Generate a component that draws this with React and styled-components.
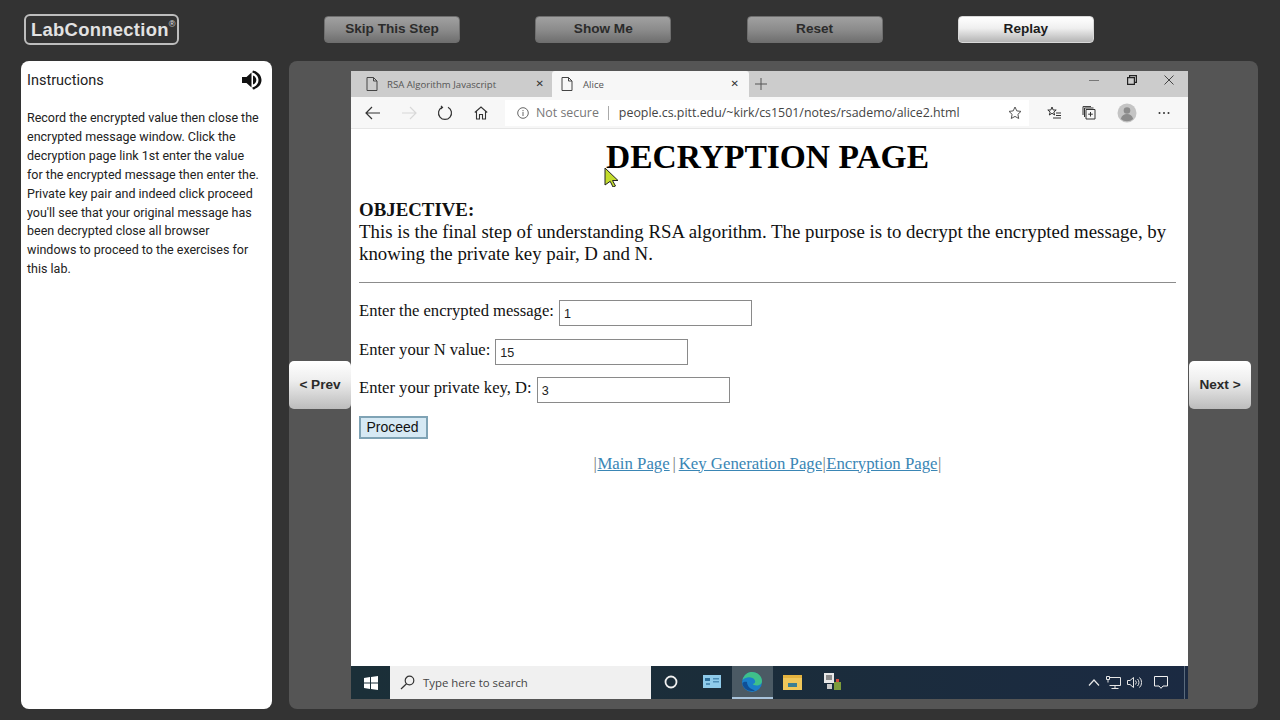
import React from "react";
import styled, { createGlobalStyle } from "styled-components";

const GlobalStyle = createGlobalStyle`
  html, body { margin: 0; padding: 0; background: #333333; }
  body { font-family: "Liberation Sans", Arial, sans-serif; overflow: hidden; }
  * { box-sizing: border-box; }
`;

const instructionLines = [
  "Record the encrypted value then close the",
  "encrypted message window. Click the",
  "decryption page link 1st enter the value",
  "for the encrypted message then enter the.",
  "Private key pair and indeed click proceed",
  "you'll see that your original message has",
  "been decrypted close all browser",
  "windows to proceed to the exercises for",
  "this lab.",
];

const fields = [
  { label: "Enter the encrypted message:", value: "1" },
  { label: "Enter your N value:", value: "15" },
  { label: "Enter your private key, D:", value: "3" },
];

const PageIcon = () => (
  <svg width="12" height="14" viewBox="0 0 12 14" fill="none" stroke="#444" strokeWidth="1">
    <path d="M1 .5h6.5l3.5 3.5v9.5H1z" />
    <path d="M7.5 .5V4H11" />
  </svg>
);

const SpeakerIcon = () => (
  <svg width="22" height="22" viewBox="0 0 22 22">
    <path d="M1 8h4.500L10.500 3.500v15L5.500 14H1z" fill="#111" />
    <path d="M12 1.500c5 1.200 8.500 4.800 8.500 9.500s-3.500 8.300-8.500 9.500l-.8-2c3.800-1 6.300-3.800 6.300-7.500s-2.500-6.500-6.300-7.500z" fill="#111" />
    <path d="M12 6.500c2 .6 3.300 2.400 3.300 4.500s-1.300 3.900-3.300 4.500z" fill="#111" />
  </svg>
);

const App = () => (
  <Page>
    <GlobalStyle />
    <TopBar>
      <Logo>
        LabConnection<LogoMark>®</LogoMark>
      </Logo>
      <TopButtons>
        <TopButton>Skip This Step</TopButton>
        <TopButton>Show Me</TopButton>
        <TopButton>Reset</TopButton>
        <TopButton $active>Replay</TopButton>
      </TopButtons>
    </TopBar>

    <Columns>
      <Sidebar>
        <SidebarHead>
          <SidebarTitle>Instructions</SidebarTitle>
          <SpeakerIcon />
        </SidebarHead>
        <SidebarText>
          {instructionLines.map((line) => (
            <div key={line}>{line}</div>
          ))}
        </SidebarText>
      </Sidebar>

      <Stage>
        <NavButton>&lt; Prev</NavButton>
        <Browser>
          <TabStrip>
            <Tab>
              <PageIcon />
              <TabLabel>RSA Algorithm Javascript</TabLabel>
              <TabClose>✕</TabClose>
            </Tab>
            <Tab $active>
              <PageIcon />
              <TabLabel>Alice</TabLabel>
              <TabClose>✕</TabClose>
            </Tab>
            <NewTab>
              <svg width="12" height="12" viewBox="0 0 12 12" stroke="#555" strokeWidth="1">
                <path d="M6 0v12M0 6h12" />
              </svg>
            </NewTab>
            <WindowControls>
              <svg width="10" height="10" viewBox="0 0 10 10" stroke="#777" strokeWidth="1">
                <path d="M0 5.500h10" />
              </svg>
              <svg width="10" height="10" viewBox="0 0 10 10" fill="none" stroke="#222" strokeWidth="1.200">
                <path d="M.6 2.600h6.800v6.800H.6zM2.600 2.600V.6h6.800v6.800H7.400" />
              </svg>
              <svg width="10" height="10" viewBox="0 0 10 10" stroke="#444" strokeWidth="1">
                <path d="M.5 .5l9 9M9.500 .5l-9 9" />
              </svg>
            </WindowControls>
          </TabStrip>

          <Toolbar>
            <ToolIcon>
              <svg width="16" height="14" viewBox="0 0 16 14" fill="none" stroke="#333" strokeWidth="1.200">
                <path d="M15 7H1M7 1 1 7l6 6" />
              </svg>
            </ToolIcon>
            <ToolIcon>
              <svg width="16" height="14" viewBox="0 0 16 14" fill="none" stroke="#d8d8d8" strokeWidth="1.200">
                <path d="M1 7h14M9 1l6 6-6 6" />
              </svg>
            </ToolIcon>
            <ToolIcon>
              <svg width="16" height="16" viewBox="0 0 16 16" fill="none" stroke="#333" strokeWidth="1.200">
                <path d="M5 2.200A6.500 6.500 0 1 0 11 2.200" />
                <path d="M4 .8 5.500 2.500 3.600 4" />
              </svg>
            </ToolIcon>
            <ToolIcon>
              <svg width="14" height="14" viewBox="0 0 14 14" fill="none" stroke="#333" strokeWidth="1.100">
                <path d="M.8 6.500 7 1l6.200 5.500M2.500 5.500V13h3V8.500h3V13h3V5.500" />
              </svg>
            </ToolIcon>
            <AddressBar>
              <svg width="12" height="12" viewBox="0 0 12 12" fill="none" stroke="#666" strokeWidth="1">
                <circle cx="6" cy="6" r="5.300" />
                <path d="M6 5v4M6 3v1.200" />
              </svg>
              <NotSecure>Not secure</NotSecure>
              <AddressDivider />
              <Url>people.cs.pitt.edu/~kirk/cs1501/notes/rsademo/alice2.html</Url>
              <StarIcon>
                <svg width="14" height="14" viewBox="0 0 14 14" fill="none" stroke="#555" strokeWidth="1">
                  <path d="M7 1l1.800 3.900 4.200.5-3.100 2.900.8 4.200L7 10.400l-3.700 2.100.8-4.200L1 5.400l4.200-.5z" />
                </svg>
              </StarIcon>
            </AddressBar>
            <ToolRight>
              <svg width="14" height="14" viewBox="0 0 14 14" fill="none" stroke="#333" strokeWidth="1">
                <path d="M5 1l1.200 3h3L6.800 6l.9 3L5 7.300 2.300 9l.9-3L.8 4h3zM9 7h5M9 9.500h5M6 12h8" />
              </svg>
              <svg width="14" height="14" viewBox="0 0 14 14" fill="none" stroke="#333" strokeWidth="1">
                <path d="M4 3.500h9v9.500H4zM2.500 11V2h9M1 9V.6h8M8.500 6v4.500M6.200 8.200h4.600" />
              </svg>
              <svg width="20" height="20" viewBox="0 0 20 20">
                <circle cx="10" cy="10" r="9.500" fill="#c4c4c4" />
                <circle cx="10" cy="7.500" r="3.300" fill="#8c8c8c" />
                <path d="M3.800 16c.8-3.500 3.200-5 6.200-5s5.400 1.500 6.200 5a9.500 9.500 0 0 1-12.400 0z" fill="#8c8c8c" />
              </svg>
              <svg width="12" height="4" viewBox="0 0 12 4" fill="#333">
                <circle cx="1.500" cy="2" r="1" />
                <circle cx="6" cy="2" r="1" />
                <circle cx="10.500" cy="2" r="1" />
              </svg>
            </ToolRight>
          </Toolbar>

          <Content>
            <Cursor>
              <svg width="16" height="20" viewBox="0 0 16 20">
                <path d="M1 1l13 12.500H8.500l3 5.500-2.500 1-2.800-5.700L1 18z" fill="#c3dc2c" stroke="#222" strokeWidth="1" />
              </svg>
            </Cursor>
            <PageTitle>DECRYPTION PAGE</PageTitle>
            <Objective>OBJECTIVE:</Objective>
            <Intro>
              This is the final step of understanding RSA algorithm. The purpose is to decrypt the
              encrypted message, by knowing the private key pair, D and N.
            </Intro>
            <Rule />
            <Form>
              {fields.map((field) => (
                <FieldRow key={field.label}>
                  <FieldLabel>{field.label}</FieldLabel>
                  <FieldInput>{field.value}</FieldInput>
                </FieldRow>
              ))}
              <Proceed>Proceed</Proceed>
            </Form>
            <LinkRow>
              <Pipe $space="0.5px">|</Pipe>
              <PageLink>Main Page</PageLink>
              <Pipe $space="2.8px">|</Pipe>
              <PageLink>Key Generation Page</PageLink>
              <Pipe $space="0.3px">|</Pipe>
              <PageLink>Encryption Page</PageLink>
              <Pipe $space="0.5px">|</Pipe>
            </LinkRow>
          </Content>

          <Taskbar>
            <StartButton>
              <svg width="14" height="14" viewBox="0 0 14 14" fill="#fff">
                <path d="M0 2l6-.9v5.500H0zM7 1l7-1v6.600H7zM0 7.400h6v5.500L0 12zM7 7.400h7V14l-7-1z" />
              </svg>
            </StartButton>
            <SearchBox>
              <svg width="15" height="15" viewBox="0 0 15 15" fill="none" stroke="#333" strokeWidth="1.200">
                <circle cx="9.500" cy="5.500" r="4.300" />
                <path d="M6.500 8.700 1 14" />
              </svg>
              <SearchText>Type here to search</SearchText>
            </SearchBox>
            <TaskSlot>
              <svg width="14" height="14" viewBox="0 0 14 14" fill="none" stroke="#f0f0f0" strokeWidth="1.800">
                <circle cx="7" cy="7" r="5.500" />
              </svg>
            </TaskSlot>
            <TaskSlot>
              <svg width="18" height="13" viewBox="0 0 18 13">
                <rect width="18" height="13" fill="#8fcbea" />
                <rect x="2" y="3" width="5" height="3" fill="#2d6f9b" />
                <rect x="10" y="3" width="6" height="1.500" fill="#4d8db5" />
                <rect x="10" y="6" width="6" height="1.500" fill="#4d8db5" />
                <rect x="3" y="8" width="4" height="2" fill="#4d8db5" />
              </svg>
            </TaskSlot>
            <TaskSlot $active>
              <svg width="22" height="22" viewBox="0 0 22 22">
                <circle cx="11" cy="11" r="10" fill="#1b7fc9" />
                <path d="M1.500 9C3 3.500 7 1 11 1c5.500 0 10 4 10 9 0 3-2.500 4.500-5.500 4.500-2 0-3.500-.8-3.800-1.500 2.500-.5 3-2.500 2-4C12 5.500 5 5 1.500 9z" fill="#3fc08a" />
                <path d="M6 11c0 4 3 7 8 8.500-1 .4-2 .5-3 .5-5 0-9.500-3.500-9.500-8 1-1 3-1.500 4.500-1z" fill="#0f4f96" />
              </svg>
            </TaskSlot>
            <TaskSlot>
              <svg width="19" height="16" viewBox="0 0 19 16">
                <path d="M0 1h7l2 2h10v13H0z" fill="#f0c75a" />
                <rect x="0" y="1" width="19" height="3" fill="#e5b33f" />
                <rect x="5" y="9" width="9" height="4" fill="#3d7f93" />
              </svg>
            </TaskSlot>
            <TaskSlot>
              <svg width="20" height="18" viewBox="0 0 20 18">
                <rect x="1" y="0" width="10" height="10" fill="#e8e8e8" />
                <rect x="3" y="2" width="6" height="5" fill="#8a8a8a" />
                <rect x="11" y="9" width="7" height="8" fill="#7d9b3a" />
                <rect x="4" y="11" width="5" height="5" fill="#c8c8c8" />
                <rect x="13" y="6" width="3" height="3" fill="#d24a3a" />
              </svg>
            </TaskSlot>
            <Tray>
              <svg width="12" height="7" viewBox="0 0 12 7" fill="none" stroke="#e6e6e6" strokeWidth="1.200">
                <path d="M1 6.500 6 1l5 5.500" />
              </svg>
              <svg width="15" height="13" viewBox="0 0 15 13" fill="none" stroke="#e6e6e6" strokeWidth="1">
                <path d="M3.500 1.500H14.500V9.500H3.500M9 9.500V12M5.500 12.500h7M.5 .5h3v3h-3zM2 3.500v3" />
              </svg>
              <svg width="15" height="13" viewBox="0 0 15 13" fill="none" stroke="#e6e6e6" strokeWidth="1">
                <path d="M.5 4.500h2.500L6.500 1.500v10L3 8.500H.5zM8.500 4.500a3 3 0 0 1 0 4M10.500 3a5 5 0 0 1 0 7M12.500 1.500a7 7 0 0 1 0 10" />
              </svg>
              <NotifyIcon>
                <svg width="14" height="13" viewBox="0 0 14 13" fill="none" stroke="#f0f0f0" strokeWidth="1">
                  <path d="M.5 .5h13v9.500H9L7 12.300 5 10H.5z" />
                </svg>
              </NotifyIcon>
            </Tray>
            <ShowDesktop />
          </Taskbar>
        </Browser>
        <NavButton>Next &gt;</NavButton>
      </Stage>
    </Columns>
  </Page>
);

const Page = styled.div`
  width: 1280px;
  height: 720px;
  background: #333333;
  overflow: hidden;
`;

const TopBar = styled.header`
  display: flex;
  align-items: flex-start;
  height: 61px;
  padding: 14px 0 0 24px;
`;

const Logo = styled.div`
  width: 155px;
  height: 31px;
  padding: 3px 0 0 5px;
  border: 2px solid #bdbdbd;
  border-radius: 6px;
  color: #e2e2e2;
  font-size: 18.4px;
  font-weight: 700;
  letter-spacing: 0.3px;
  line-height: 20px;
  white-space: nowrap;
`;

const LogoMark = styled.span`
  display: inline-block;
  font-size: 9px;
  font-weight: 400;
  line-height: 10px;
  letter-spacing: 0;
  vertical-align: 9px;
`;

const TopButtons = styled.div`
  display: flex;
  gap: 75.3px;
  margin: 2px 0 0 145px;
`;

const TopButton = styled.button`
  width: 136px;
  height: 27px;
  padding: 0 0 3px;
  border: 1px solid ${(p) => (p.$active ? "#d8d8d8" : "#6e6e6e")};
  border-radius: 4px;
  background: ${(p) =>
    p.$active
      ? "linear-gradient(#ffffff, #efefef 45%, #b4b4b4)"
      : "linear-gradient(#a0a0a0, #8c8c8c 50%, #6f6f6f)"};
  color: ${(p) => (p.$active ? "#1c1c1c" : "#2b2b2b")};
  font-family: "Liberation Sans", Arial, sans-serif;
  font-size: 13.6px;
  font-weight: 700;
`;

const Columns = styled.main`
  display: flex;
  gap: 17px;
  height: 648px;
  padding-left: 21px;
`;

const Sidebar = styled.aside`
  width: 251px;
  height: 648px;
  padding: 9px 9px 0 6px;
  background: #ffffff;
  border-radius: 8px;
`;

const SidebarHead = styled.div`
  display: flex;
  align-items: center;
  justify-content: space-between;
  height: 20px;
`;

const SidebarTitle = styled.h2`
  margin: 0;
  color: #222;
  font-family: Roboto, sans-serif;
  font-size: 14.5px;
  font-weight: 400;
`;

const SidebarText = styled.div`
  margin-top: 19px;
  color: #222;
  font-family: Roboto, sans-serif;
  font-size: 12.5px;
  line-height: 18.9px;
  white-space: nowrap;
`;

const Stage = styled.section`
  display: flex;
  align-items: center;
  width: 969px;
  height: 648px;
  padding-right: 7px;
  background: #555555;
  border-radius: 8px;
`;

const NavButton = styled.button`
  flex: none;
  width: 62px;
  height: 48px;
  padding: 0 0 2px;
  border: 0;
  border-radius: 5px;
  background: linear-gradient(#ffffff, #eeeeee 40%, #bcbcbc);
  color: #2a2a2a;
  font-family: "Liberation Sans", Arial, sans-serif;
  font-size: 13.6px;
  font-weight: 700;
`;

const Browser = styled.div`
  display: flex;
  flex-direction: column;
  width: 837px;
  height: 628px;
  margin-right: 1px;
  background: #ffffff;
`;

const TabStrip = styled.div`
  display: flex;
  align-items: flex-end;
  flex: none;
  height: 26px;
  background: #cccccc;
`;

const Tab = styled.div`
  display: flex;
  align-items: center;
  gap: ${(p) => (p.$active ? "10px" : "9px")};
  width: ${(p) => (p.$active ? "197px" : "201px")};
  height: 26px;
  padding: 0 ${(p) => (p.$active ? "10px" : "8px")} 0 ${(p) => (p.$active ? "9px" : "15px")};
  background: ${(p) => (p.$active ? "#f7f7f7" : "#cccccc")};
  border-radius: 3px 3px 0 0;
`;

const TabLabel = styled.span`
  flex: 1;
  color: #555;
  font-family: "Open Sans", sans-serif;
  font-size: 9.6px;
  white-space: nowrap;
`;

const TabClose = styled.span`
  color: #333;
  font-family: "DejaVu Sans", sans-serif;
  font-size: 10px;
  line-height: 12px;
`;

const NewTab = styled.div`
  display: flex;
  align-items: center;
  justify-content: center;
  width: 24px;
  height: 26px;
`;

const WindowControls = styled.div`
  display: flex;
  align-items: center;
  gap: 27.5px;
  height: 26px;
  margin-left: auto;
  padding: 0 14px 8px 0;
`;

const Toolbar = styled.div`
  display: flex;
  align-items: center;
  flex: none;
  height: 32px;
  padding-left: 4px;
  background: #f7f7f7;
  border-bottom: 1px solid #e6e6e6;
`;

const ToolIcon = styled.div`
  display: flex;
  align-items: center;
  justify-content: center;
  width: 36px;
`;

const AddressBar = styled.div`
  display: flex;
  align-items: center;
  width: 524px;
  height: 26px;
  margin-left: 6px;
  padding: 0 7px 0 12px;
  background: #ffffff;
`;

const NotSecure = styled.span`
  margin-left: 7px;
  color: #777;
  font-family: "Open Sans", sans-serif;
  font-size: 12.4px;
  white-space: nowrap;
`;

const AddressDivider = styled.span`
  width: 1px;
  height: 14px;
  margin: 0 10px 0 9px;
  background: #aaa;
`;

const Url = styled.span`
  color: #444;
  font-family: "Open Sans", sans-serif;
  font-size: 12.4px;
  white-space: nowrap;
`;

const StarIcon = styled.span`
  display: flex;
  margin-left: auto;
`;

const ToolRight = styled.div`
  display: flex;
  align-items: center;
  gap: 21px;
  margin-left: 18px;
`;

const Content = styled.div`
  position: relative;
  flex: 1;
  padding: 9px 12px 0 8px;
  color: #111;
  font-family: "Liberation Serif", "Times New Roman", serif;
  font-size: 18.85px;
  line-height: 22px;
`;

const Cursor = styled.div`
  position: absolute;
  top: 38px;
  left: 253px;
  display: flex;
`;

const PageTitle = styled.h1`
  margin: 0 0 23px;
  color: #000;
  font-size: 33.5px;
  font-weight: 700;
  line-height: 38px;
  text-align: center;
`;

const Objective = styled.div`
  font-weight: 700;
`;

const Intro = styled.p`
  margin: 0;
`;

const Rule = styled.hr`
  margin: 17px 0 17px;
  border: 0;
  border-top: 1px solid #8c8c8c;
`;

const Form = styled.form`
  display: flex;
  flex-direction: column;
  align-items: flex-start;
  gap: 12.5px;
`;

const FieldRow = styled.div`
  display: flex;
  align-items: flex-start;
  gap: 5px;
`;

const FieldLabel = styled.span`
  margin-top: 1px;
  font-size: 16.6px;
  line-height: 20px;
`;

const FieldInput = styled.div`
  width: 193px;
  height: 26px;
  padding: 5px 0 0 4px;
  border: 1px solid #8a8a8a;
  background: #fff;
  color: #222;
  font-family: "Liberation Sans", Arial, sans-serif;
  font-size: 12.6px;
  line-height: 16px;
`;

const Proceed = styled.button`
  width: 69px;
  height: 23px;
  padding: 0 2px 0 0;
  border: 2px solid #7fa3b5;
  background: #d6e9f4;
  color: #111;
  font-family: "Liberation Sans", Arial, sans-serif;
  font-size: 14px;
`;

const LinkRow = styled.div`
  display: flex;
  justify-content: center;
  margin-top: 14px;
  font-size: 16.8px;
  line-height: 22px;
`;

const Pipe = styled.span`
  margin: 0 ${(p) => p.$space};
  color: #777;
`;

const PageLink = styled.a`
  color: #3a86b5;
  text-decoration: underline;
`;

const Taskbar = styled.div`
  display: flex;
  align-items: center;
  flex: none;
  height: 33px;
  background: linear-gradient(90deg, #1b2f38, #1b2d3a 45%, #1b2a42);
`;

const StartButton = styled.div`
  display: flex;
  align-items: center;
  justify-content: center;
  width: 39px;
  height: 33px;
`;

const SearchBox = styled.div`
  display: flex;
  align-items: center;
  gap: 8px;
  width: 261px;
  height: 33px;
  padding-left: 10px;
  background: #f0f0f0;
`;

const SearchText = styled.span`
  color: #444;
  font-family: "Open Sans", sans-serif;
  font-size: 11.4px;
`;

const TaskSlot = styled.div`
  display: flex;
  align-items: center;
  justify-content: center;
  width: 40.5px;
  height: 33px;
  background: ${(p) => (p.$active ? "#4b5a64" : "transparent")};
  border-bottom: 2px solid ${(p) => (p.$active ? "#a9c4dc" : "transparent")};
`;

const Tray = styled.div`
  display: flex;
  align-items: center;
  gap: 6px;
  margin-left: auto;
  padding-right: 16px;
`;

const NotifyIcon = styled.span`
  display: flex;
  margin-left: 6px;
`;

const ShowDesktop = styled.div`
  width: 1px;
  height: 33px;
  margin-right: 3px;
  background: #5b6b7c;
`;

export default App;
